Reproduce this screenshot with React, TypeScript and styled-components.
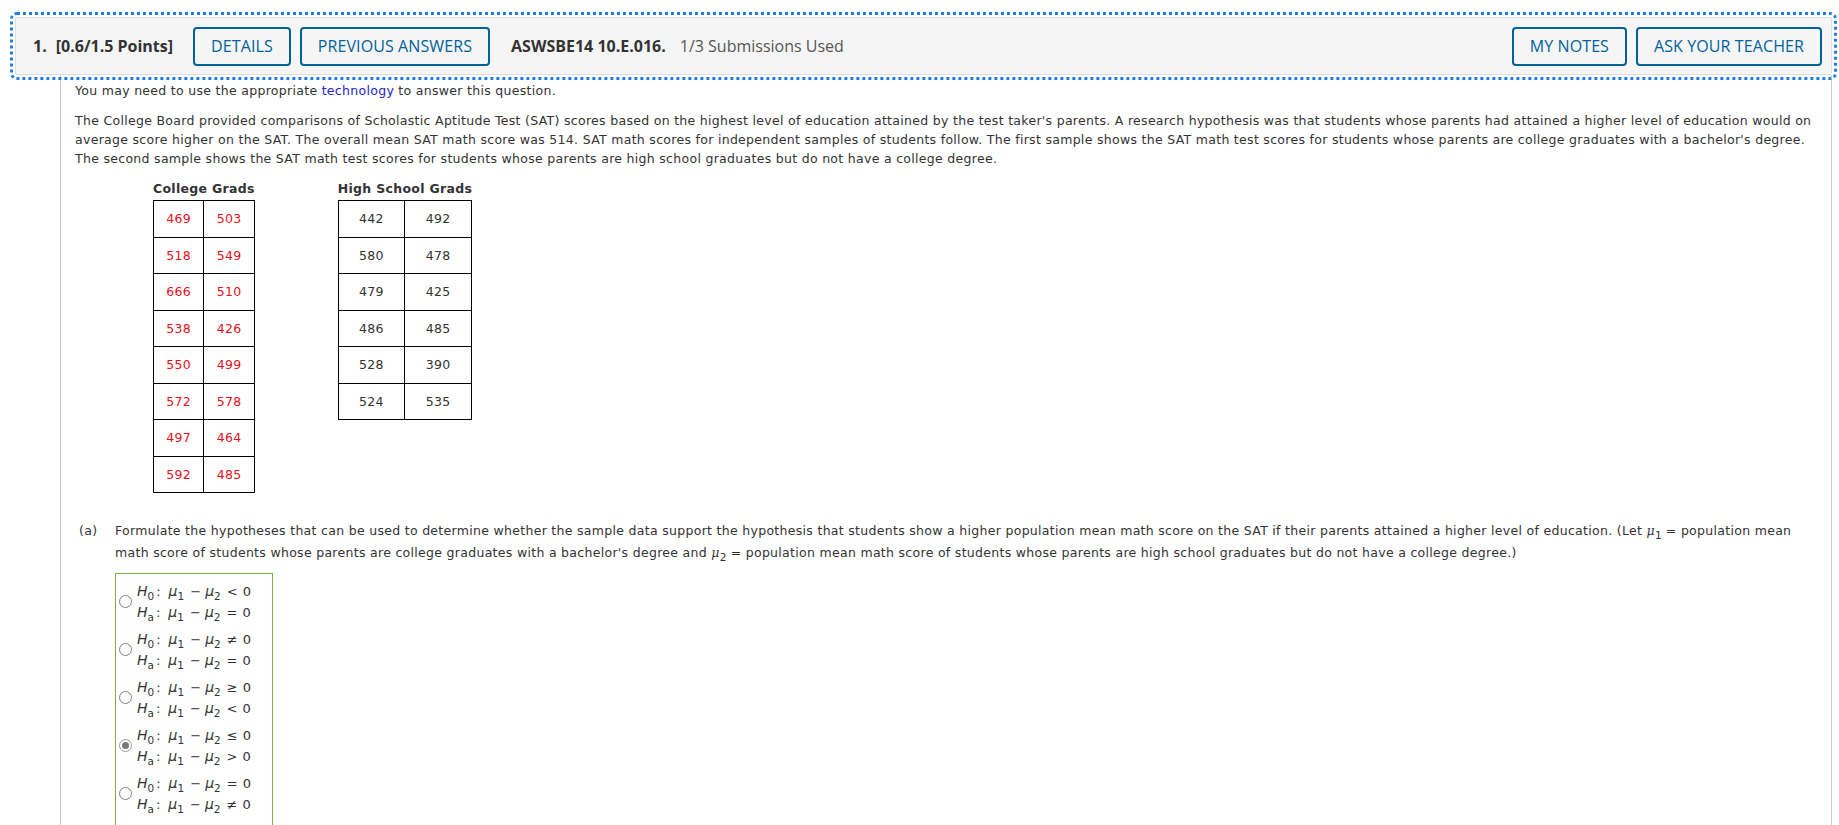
import React from "react";
import styled, { createGlobalStyle } from "styled-components";

const Global = createGlobalStyle`
  html, body { margin: 0; padding: 0; background: #fff; }
  body { font-family: "DejaVu Sans", Verdana, sans-serif; color: #333; }
`;

const Page = styled.div`
  padding: 17px 7px 0 15px;
`;

const Header = styled.div`
  display: flex;
  align-items: center;
  height: 56px;
  padding: 0 9px 0 17px;
  background: #f5f5f5;
  border: 1px solid #ddd;
  border-radius: 2px;
  outline: 3px dotted #1d7fe3;
  outline-offset: 2px;
  font-family: "Open Sans", "Liberation Sans", sans-serif;
  font-size: 16px;
  color: #333;
  position: relative;
  z-index: 1;
`;

const Title = styled.span`
  font-weight: 700;
  display: flex;
  gap: 9px;
  margin-right: 20px;
`;

const Btn = styled.button`
  height: 39px;
  padding: 0 16px;
  border: 2px solid #00629b;
  border-radius: 4px;
  background: transparent;
  color: #00629b;
  font-family: "Open Sans", "Liberation Sans", sans-serif;
  font-size: 16px;
  letter-spacing: 0.1px;
  margin-right: 9px;
  white-space: nowrap;
`;

const Code = styled.span`
  font-weight: 700;
  margin-left: 12px;
  margin-right: 14px;
`;

const Subs = styled.span`
  color: #555;
`;

const Spacer = styled.div`
  flex: 1;
`;

const Body = styled.div`
  margin-left: 45px;
  border-left: 1px solid #ccc;
  border-right: 1px solid #ccc;
  padding: 6px 12px 0 14px;
  font-size: 12.5px;
  letter-spacing: 0.3px;
  line-height: 19px;
  min-height: 760px;
`;

const P = styled.p`
  margin: 0 0 11px 0;
`;

const Link = styled.a`
  color: #2323c8;
  text-decoration: none;
`;

const Tables = styled.div`
  display: flex;
  gap: 83px;
  margin-left: 78px;
`;

const TableBlock = styled.div`
  display: flex;
  flex-direction: column;
`;

const TableTitle = styled.div`
  font-weight: 700;
  margin-bottom: 2px;
`;

const Grid = styled.table`
  border-collapse: collapse;
  table-layout: fixed;
`;

const Cell = styled.td<{ $w: number; $red?: boolean }>`
  width: ${(p) => p.$w}px;
  height: 35.5px;
  padding: 0;
  border: 1px solid #000;
  text-align: center;
  color: ${(p) => (p.$red ? "#e8101c" : "#333")};
`;

const Part = styled.div`
  display: flex;
  margin-top: 27px;
  line-height: 22px;
`;

const PartLabel = styled.div`
  width: 40px;
  flex: none;
  padding-left: 4px;
  box-sizing: border-box;
`;

const PartContent = styled.div`
  flex: 1;
`;

const Mu = styled.i`
  font-family: "DejaVu Serif", serif;
  font-style: italic;
`;

const Sub = styled.sub`
  font-size: 10.5px;
  vertical-align: -4px;
  line-height: 0;
  font-style: normal;
  letter-spacing: 0;
`;

const AnswerBox = styled.div`
  width: 158px;
  box-sizing: border-box;
  border: 1px solid #7db248;
  margin-top: 9px;
  padding: 7px 0 20px 3px;
  display: flex;
  flex-direction: column;
  gap: 6px;
`;

const Option = styled.label`
  display: flex;
  align-items: center;
  gap: 5px;
`;

const Radio = styled.span<{ $checked?: boolean }>`
  width: 13px;
  height: 13px;
  box-sizing: border-box;
  border-radius: 50%;
  border: 1px solid ${(p) => (p.$checked ? "#9a9a9a" : "#808080")};
  background: #fff;
  display: flex;
  align-items: center;
  justify-content: center;
  margin-bottom: 2px;
  flex: none;
  &::after {
    content: "";
    width: 7px;
    height: 7px;
    border-radius: 50%;
    background: ${(p) => (p.$checked ? "#7a7a7a" : "transparent")};
  }
`;

const Hyp = styled.div`
  display: flex;
  flex-direction: column;
  font-size: 13px;
  letter-spacing: 0;
  line-height: 21px;
  color: #333;
`;

const MathVar = styled.i`
  font-style: italic;
  font-size: 14px;
`;

const Op = styled.span`
  margin: 0 4px 0 6px;
`;

const Colon = styled.span`
  margin: 0 8px 0 2px;
`;

const Rel = styled.span`
  margin: 0 5px 0 6px;
`;

const college = [
  [469, 503],
  [518, 549],
  [666, 510],
  [538, 426],
  [550, 499],
  [572, 578],
  [497, 464],
  [592, 485],
];

const high = [
  [442, 492],
  [580, 478],
  [479, 425],
  [486, 485],
  [528, 390],
  [524, 535],
];

const options: [string, string][] = [
  ["<", "="],
  ["≠", "="],
  ["≥", "<"],
  ["≤", ">"],
  ["=", "≠"],
];

function Line({ h, rel }: { h: string; rel: string }) {
  return (
    <span>
      <MathVar>H</MathVar>
      <Sub>{h}</Sub>
      <Colon>:</Colon>
      <MathVar>μ</MathVar>
      <Sub>1</Sub>
      <Op>−</Op>
      <MathVar>μ</MathVar>
      <Sub>2</Sub>
      <Rel>{rel}</Rel>0
    </span>
  );
}

export default function App() {
  return (
    <>
      <Global />
      <Page>
        <Header>
          <Title>
            <span>1.</span>
            <span>[0.6/1.5 Points]</span>
          </Title>
          <Btn>DETAILS</Btn>
          <Btn>PREVIOUS ANSWERS</Btn>
          <Code>ASWSBE14 10.E.016.</Code>
          <Subs>1/3 Submissions Used</Subs>
          <Spacer />
          <Btn>MY NOTES</Btn>
          <Btn style={{ marginRight: 0 }}>ASK YOUR TEACHER</Btn>
        </Header>
        <Body>
          <P>
            You may need to use the appropriate <Link href="#">technology</Link> to answer this question.
          </P>
          <P>
            The College Board provided comparisons of Scholastic Aptitude Test (SAT) scores based on the highest level of
            education attained by the test taker's parents. A research hypothesis was that students whose parents had
            attained a higher level of education would on average score higher on the SAT. The overall mean SAT math score
            was 514. SAT math scores for independent samples of students follow. The first sample shows the SAT math test
            scores for students whose parents are college graduates with a bachelor's degree. The second sample shows the
            SAT math test scores for students whose parents are high school graduates but do not have a college degree.
          </P>
          <Tables>
            <TableBlock>
              <TableTitle>College Grads</TableTitle>
              <Grid>
                <tbody>
                  {college.map((r, i) => (
                    <tr key={i}>
                      <Cell $w={49} $red>{r[0]}</Cell>
                      <Cell $w={49} $red>{r[1]}</Cell>
                    </tr>
                  ))}
                </tbody>
              </Grid>
            </TableBlock>
            <TableBlock>
              <TableTitle>High School Grads</TableTitle>
              <Grid>
                <tbody>
                  {high.map((r, i) => (
                    <tr key={i}>
                      <Cell $w={63}>{r[0]}</Cell>
                      <Cell $w={64}>{r[1]}</Cell>
                    </tr>
                  ))}
                </tbody>
              </Grid>
            </TableBlock>
          </Tables>
          <Part>
            <PartLabel>(a)</PartLabel>
            <PartContent>
              Formulate the hypotheses that can be used to determine whether the sample data support the hypothesis that
              students show a higher population mean math score on the SAT if their parents attained a higher level of
              education. (Let <Mu>μ</Mu>
              <Sub>1</Sub> = population mean math score of students whose parents are college graduates with a
              bachelor's degree and <Mu>μ</Mu>
              <Sub>2</Sub> = population mean math score of students whose parents are high school graduates but do not
              have a college degree.)
              <AnswerBox>
                {options.map(([a, b], i) => (
                  <Option key={i}>
                    <Radio $checked={i === 3} />
                    <Hyp>
                      <Line h="0" rel={a} />
                      <Line h="a" rel={b} />
                    </Hyp>
                  </Option>
                ))}
              </AnswerBox>
            </PartContent>
          </Part>
        </Body>
      </Page>
    </>
  );
}
